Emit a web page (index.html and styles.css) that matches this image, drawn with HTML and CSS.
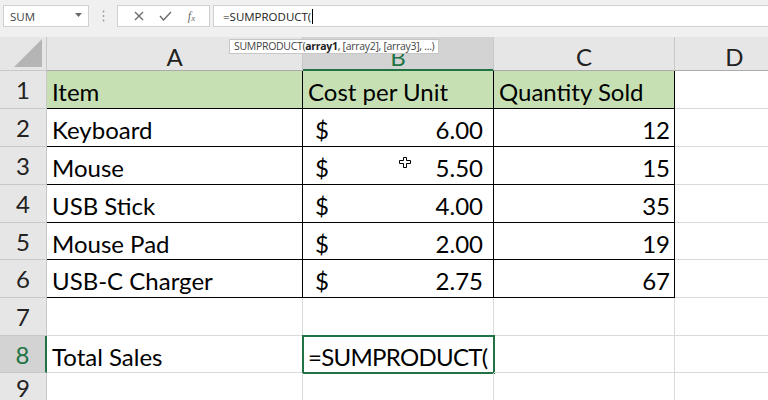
FILE: index.html
```html
<!DOCTYPE html>
<html lang="en">
<head>
    <meta charset="UTF-8">
    <title>SUMPRODUCT</title>
    <link rel="stylesheet" href="styles.css">
</head>
<body>
    <div class="barra">
        <div class="nombre">
            <span>SUM</span>
            <svg class="flecha" width="7" height="4" viewBox="0 0 7 4"><path d="M0 0h7L3.5 4z" fill="#6b6b6b"/></svg>
        </div>
        <div class="puntos">
            <svg width="3" height="12" viewBox="0 0 3 12"><circle cx="1.5" cy="1.5" r="0.9" fill="#9a9a9a"/><circle cx="1.5" cy="6" r="0.9" fill="#9a9a9a"/><circle cx="1.5" cy="10.5" r="0.9" fill="#9a9a9a"/></svg>
        </div>
        <div class="botones">
            <svg width="10" height="10" viewBox="0 0 10 10"><path d="M1 1l8 8M9 1l-8 8" stroke="#6a6a6a" stroke-width="1.3"/></svg>
            <svg width="13" height="10" viewBox="0 0 13 10"><path d="M1 5l3.5 4L12 1" stroke="#6a6a6a" stroke-width="1.4" fill="none"/></svg>
            <span class="fx">f<sub>x</sub></span>
        </div>
        <div class="formula">=SUMPRODUCT(<span class="caret"></span></div>
    </div>

    <div class="hoja">
        <div class="esquina"><div class="triangulo"></div></div>
        <div class="col">A</div>
        <div class="col activa">B</div>
        <div class="col">C</div>
        <div class="col">D</div>

        <div class="fila">1</div>
        <div class="celda borde verde">Item</div>
        <div class="celda borde verde">Cost per Unit</div>
        <div class="celda borde verde">Quantity Sold</div>
        <div class="celda"></div>

        <div class="fila">2</div>
        <div class="celda borde">Keyboard</div>
        <div class="celda borde dinero"><span>$</span><span>6.00</span></div>
        <div class="celda borde num">12</div>
        <div class="celda"></div>

        <div class="fila">3</div>
        <div class="celda borde">Mouse</div>
        <div class="celda borde dinero"><span>$</span><span>5.50</span>
            <svg class="cursor" width="12" height="11" viewBox="0 0 12 11"><path d="M4.5 0.5h3v3h4v3h-4v4h-3v-4h-4v-3h4z" fill="#fff" stroke="#000" stroke-width="1"/></svg>
        </div>
        <div class="celda borde num">15</div>
        <div class="celda"></div>

        <div class="fila">4</div>
        <div class="celda borde">USB Stick</div>
        <div class="celda borde dinero"><span>$</span><span>4.00</span></div>
        <div class="celda borde num">35</div>
        <div class="celda"></div>

        <div class="fila">5</div>
        <div class="celda borde">Mouse Pad</div>
        <div class="celda borde dinero"><span>$</span><span>2.00</span></div>
        <div class="celda borde num">19</div>
        <div class="celda"></div>

        <div class="fila">6</div>
        <div class="celda borde">USB-C Charger</div>
        <div class="celda borde dinero"><span>$</span><span>2.75</span></div>
        <div class="celda borde num">67</div>
        <div class="celda"></div>

        <div class="fila">7</div>
        <div class="celda"></div>
        <div class="celda"></div>
        <div class="celda"></div>
        <div class="celda"></div>

        <div class="fila activa">8</div>
        <div class="celda">Total Sales</div>
        <div class="celda editando">=SUMPRODUCT(</div>
        <div class="celda"></div>
        <div class="celda"></div>

        <div class="fila">9</div>
        <div class="celda"></div>
        <div class="celda"></div>
        <div class="celda"></div>
        <div class="celda"></div>

        <div class="ayuda">SUMPRODUCT(<b>array1</b>, [array2], [array3], ...)</div>
    </div>
</body>
</html>
```

FILE: styles.css
```css
body{
    margin: 0;
    padding: 0;
    font-family: Lato, sans-serif;
    background-color: #fff;
    overflow: hidden;
}
.barra{
    display: flex;
    align-items: flex-start;
    height: 37px;
    padding: 5px 0 0 3px;
    box-sizing: border-box;
    background-color: #f0f0f0;
    font-family: "Open Sans", sans-serif;
}
.nombre{
    display: flex;
    align-items: center;
    justify-content: space-between;
    width: 86px;
    height: 22px;
    box-sizing: border-box;
    padding: 0 6px 0 6px;
    background-color: #fff;
    border: 1px solid #d0d0d0;
    font-size: 11.5px;
    color: #444;
}
.flecha{
    margin-top: -2px;
}
.puntos{
    width: 28px;
    height: 22px;
    display: flex;
    align-items: center;
    justify-content: center;
}
.botones{
    display: flex;
    align-items: center;
    justify-content: space-around;
    width: 93px;
    height: 22px;
    box-sizing: border-box;
    padding: 0 6px 0 8px;
    background-color: #fff;
    border: 1px solid #d0d0d0;
}
.fx{
    font-family: "Liberation Serif", serif;
    font-style: italic;
    font-size: 12px;
    color: #6a6a6a;
    line-height: 1;
}
.fx sub{
    font-size: 9px;
    vertical-align: -1px;
}
.formula{
    flex: 1;
    height: 22px;
    margin-left: 3px;
    box-sizing: border-box;
    padding: 0 0 0 9px;
    background-color: #fff;
    border: 1px solid #d0d0d0;
    border-right: none;
    display: flex;
    align-items: center;
    font-size: 11.5px;
    color: #222;
}
.caret{
    display: inline-block;
    width: 1px;
    height: 15px;
    margin-left: 1px;
    background-color: #000;
}

.hoja{
    position: relative;
    display: grid;
    grid-template-columns: 47px 256px 191px 181px 120px;
    grid-template-rows: 34px 38px 38px 38px 38px 37px 38px 38px 37px 30px;
}
.esquina, .col, .fila{
    background-color: #e6e6e6;
    box-sizing: border-box;
    border-right: 1px solid #c8c8c8;
    border-bottom: 1px solid #c8c8c8;
    display: flex;
    align-items: center;
    justify-content: center;
    font-size: 24px;
    color: #222;
}
.esquina{
    align-items: flex-end;
    justify-content: flex-end;
    padding: 0 4px 3px 0;
}
.triangulo{
    width: 0;
    height: 0;
    border-left: 28px solid transparent;
    border-bottom: 28px solid #b5b5b5;
}
.col{
    border-bottom: 1px solid #ababab;
    padding-top: 6px;
}
.col.activa{
    background-color: #d3d3d3;
    color: #217346;
    border-bottom: 2px solid #217346;
}
.fila.activa{
    background-color: #d3d3d3;
    color: #217346;
    border-right: 2px solid #217346;
}
.celda{
    box-sizing: border-box;
    border-right: 1px solid #dadada;
    border-bottom: 1px solid #dadada;
    display: flex;
    align-items: center;
    padding: 4px 4px 0 5px;
    font-size: 24px;
    color: #000;
    white-space: nowrap;
    overflow: hidden;
}
.borde{
    border-right-color: #000;
    border-bottom-color: #000;
}
.verde{
    background-color: #c6e0b4;
}
.dinero{
    position: relative;
    justify-content: space-between;
    padding-left: 12px;
    padding-right: 10px;
    overflow: visible;
}
.num{
    justify-content: flex-end;
}
.cursor{
    position: absolute;
    left: 96px;
    top: 10px;
}
.editando{
    outline: 2px solid #217346;
    outline-offset: -1px;
    letter-spacing: -0.7px;
    overflow: hidden;
}
.ayuda{
    position: absolute;
    left: 229px;
    top: 2px;
    height: 15px;
    padding: 0 4px;
    box-sizing: border-box;
    background-color: #fff;
    border: 1px solid #c6c6c6;
    font-family: "Open Sans", sans-serif;
    font-size: 10.5px;
    line-height: 13px;
    color: #444;
    letter-spacing: -0.3px;
    white-space: nowrap;
}
.ayuda b{
    color: #222;
}
```
